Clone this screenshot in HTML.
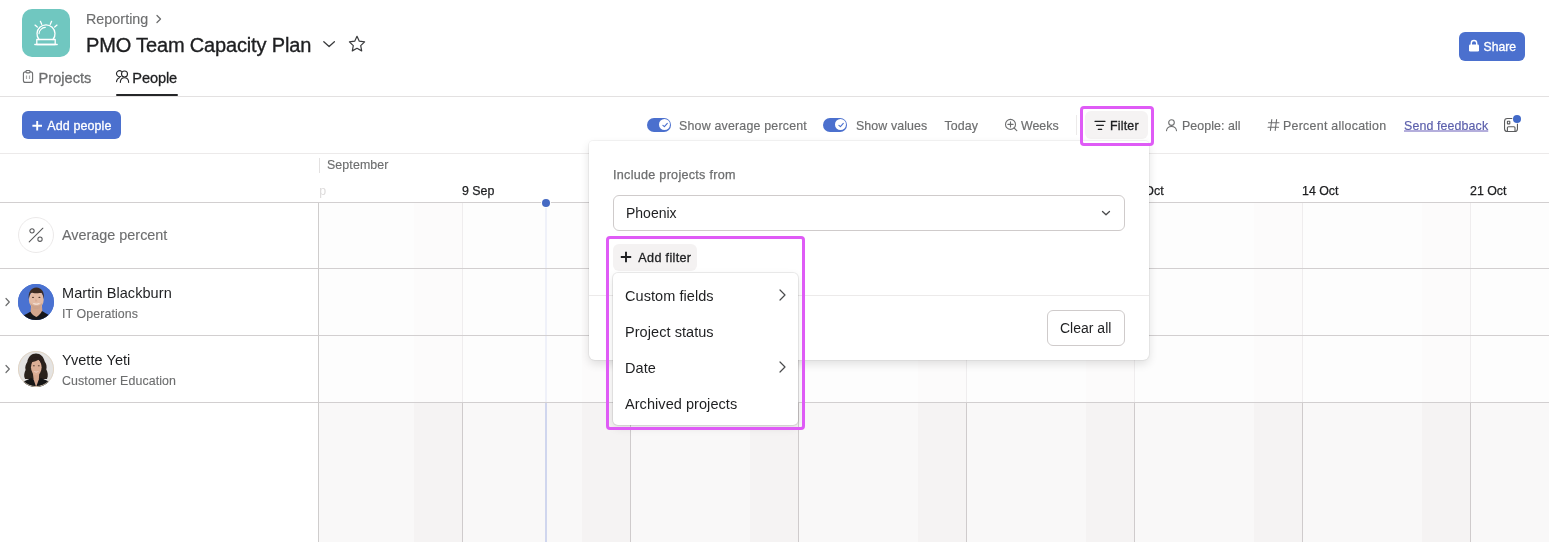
<!DOCTYPE html>
<html lang="en">
<head>
<meta charset="utf-8">
<title>PMO Team Capacity Plan</title>
<style>
*{box-sizing:border-box;margin:0;padding:0}
html,body{width:1549px;height:542px;overflow:hidden;background:#fff}
body{font-family:"Liberation Sans",Arial,sans-serif;color:#1e1f21;position:relative;-webkit-font-smoothing:antialiased}
.abs{position:absolute}
.t{position:absolute;white-space:nowrap;line-height:1}
/* header */
#icon{left:22px;top:9px;width:48px;height:48px;border-radius:10px;background:#70c7c0}
#crumb{left:86px;top:12px;font-size:14.3px;color:#6d6e6f;letter-spacing:0.04px;-webkit-text-stroke:0.15px}
#title{left:86px;top:34.600px;font-size:20px;color:#1e1f21;letter-spacing:-0.16px;-webkit-text-stroke:0.35px #1e1f21}
#share{left:1459px;top:32px;width:66px;height:28.5px;border-radius:6px;background:#4b70ce;color:#fff;font-size:12.2px;-webkit-text-stroke:0.3px #fff}
#hdrline{left:0;top:96px;width:1549px;height:1px;background:#e3e1e1}
.tab{font-size:14.6px;top:70.600px;-webkit-text-stroke:0.3px}
#tabul{left:116.400px;top:93.500px;width:61.200px;height:2.100px;background:#252628;border-radius:1px}
/* toolbar */
#addp{left:22px;top:111px;width:98.5px;height:28px;border-radius:6px;background:#4b70ce;color:#fff;font-size:12.5px;-webkit-text-stroke:0.3px #fff}
.tb{font-size:12.4px;color:#6d6e6f;top:119.500px;-webkit-text-stroke:0.18px}
.tog{position:absolute;top:117.500px;width:24px;height:14px;border-radius:7px;background:#4b70ce}
.tog i{position:absolute;right:1px;top:1.500px;width:11px;height:11px;border-radius:5.500px;background:#fff}
#tbline{left:0;top:153px;width:1549px;height:1px;background:#eceaea}
/* grid */
#grid{left:319px;top:203px;width:1230px;height:339px;overflow:hidden;background:#f9f8f8}
#gridlow{left:0;top:0;width:1230px;height:200px;background:rgba(255,255,255,0.66)}
.we{position:absolute;top:0;width:48px;height:339px;background:#f5f3f3}
.wl{position:absolute;top:0;width:1px;height:339px;background:#cfcbcc}
.hl{position:absolute;left:0;height:1px;background:#d2cfd0}
#leftline{left:318px;top:203px;width:1px;height:339px;background:#cfcdcd}
.date{font-size:12.4px;color:#1e1f21;top:184.600px;-webkit-text-stroke:0.25px}
.nm{font-size:14.5px;color:#1e1f21;left:62px;letter-spacing:0.06px}
.sub{font-size:12.4px;color:#6d6e6f;left:62px;letter-spacing:0.1px;margin-top:0.500px;-webkit-text-stroke:0.12px}
.chev{position:absolute;left:4px}
.av{position:absolute;left:18px;width:36px;height:36px;border-radius:18px;overflow:hidden}
/* panel */
#panel{left:589px;top:141px;width:560px;height:219px;background:#fff;border-radius:4px 4px 6px 6px;box-shadow:0 0 0 1px rgba(0,0,0,0.045),0 4px 10px rgba(0,0,0,0.12)}
#sel{left:613px;top:195px;width:512px;height:36px;border:1px solid #cfcbcb;border-radius:6px;background:#fff}
#addf{left:613px;top:243.500px;width:83.500px;height:27px;border-radius:6px;background:#f4f2f2}
#menu{left:613px;top:273px;width:185px;height:152px;border-radius:5px;background:#fff;box-shadow:0 0 0 1px rgba(0,0,0,0.07),0 3px 8px rgba(0,0,0,0.10)}
.mi{font-size:14.5px;color:#1e1f21;left:625px;letter-spacing:0.06px;margin-top:0.500px}
#pdiv{left:589px;top:295px;width:560px;height:1px;background:#eceaea}
#clr{left:1047px;top:310px;width:78px;height:36px;border:1px solid #cfcbcb;border-radius:6px;background:#fff}
.hi{position:absolute;border:3px solid #df5bf6;border-radius:4px}
</style>
</head>
<body>
<div id="root" style="position:absolute;left:0;top:0;width:1549px;height:542px;will-change:transform">
<!-- HEADER -->
<div id="icon" class="abs">
<svg width="48" height="48" viewBox="0 0 48 48" fill="none" stroke="#fff" stroke-width="1.300" stroke-linecap="round" stroke-linejoin="round">
<path d="M17 30.500a9 9 0 1 1 14 0"/>
<path d="M14.800 30.500h18.400v5h-18.400z"/>
<path d="M12.800 35.500h22.400"/>
<path d="M17 24.600a6.600 6.600 0 0 1 6.300-6.200" stroke-width="1.100"/>
<path d="M18.400 12.300l1.300 3M29.600 12.300l-1.300 3M13 16.100l2.300 2M35 16.100l-2.300 2"/>
</svg>
</div>
<div id="crumb" class="t">Reporting</div>
<svg class="abs" style="left:154px;top:13px" width="10" height="12" viewBox="0 0 10 12" fill="none" stroke="#6d6e6f" stroke-width="1.3" stroke-linecap="round" stroke-linejoin="round"><path d="M3 2.500l3.500 3.500-3.500 3.500"/></svg>
<div id="title" class="t">PMO Team Capacity Plan</div>
<svg class="abs" style="left:321px;top:38px" width="16" height="12" viewBox="0 0 16 12" fill="none" stroke="#3a3b3d" stroke-width="1.300" stroke-linecap="round" stroke-linejoin="round"><path d="M2.800 3.800l5.300 4.700 5.300-4.700"/></svg>
<svg class="abs" style="left:347px;top:34px" width="20" height="20" viewBox="0 0 20 20" fill="none" stroke="#3a3b3d" stroke-width="1.2" stroke-linejoin="round"><path d="M10 2.300l2.300 4.900 5.300.7-3.900 3.700 1 5.300-4.700-2.600-4.700 2.600 1-5.300-3.900-3.700 5.300-.7z"/></svg>
<div id="share" class="abs"><svg class="abs" style="left:9px;top:7px" width="12" height="13" viewBox="0 0 12 13"><rect x="1" y="5.500" width="10" height="7" rx="1.300" fill="#fff"/><path d="M3.300 6V4.200a2.700 2.700 0 0 1 5.400 0V6" fill="none" stroke="#fff" stroke-width="1.400"/></svg><span class="t" style="left:24.500px;top:8.800px">Share</span></div>
<!-- tabs -->
<svg class="abs" style="left:22px;top:69px" width="12" height="15" viewBox="0 0 12 15" fill="none" stroke="#6d6e6f" stroke-width="1.100"><rect x="1.400" y="2.900" width="9.200" height="10.500" rx="2"/><rect x="4" y="1.500" width="4" height="2.400" rx=".9" fill="#fff"/><path d="M4.500 6.600v3.400M7.500 6.600v3.400" stroke="#a9a9aa" stroke-width="1.200"/></svg>
<div class="t tab" style="left:38.600px;color:#6d6e6f">Projects</div>
<svg class="abs" style="left:115px;top:69px" width="16" height="15" viewBox="0 0 16 15" fill="none" stroke="#252628" stroke-width="1.100" stroke-linecap="round"><circle cx="9.500" cy="5" r="3"/><path d="M5.300 13.400c.2-2.900 1.800-4.600 4.200-4.600s4 1.700 4.200 4.600"/><path d="M5.700 7.500a3 3 0 1 1 .8-5.100M1.500 12.800c.2-2 1.200-3.500 2.900-4.100"/></svg>
<div class="t tab" style="left:132.300px;color:#1e1f21;letter-spacing:-0.1px">People</div>
<div id="tabul" class="abs"></div>
<div id="hdrline" class="abs"></div>
<!-- TOOLBAR -->
<div id="addp" class="abs"><svg class="abs" style="left:9px;top:8.500px" width="13" height="13" viewBox="0 0 13 13" stroke="#fff" stroke-width="1.900"><path d="M6.200 1v9.600M1.400 5.800h9.600"/></svg><span class="t" style="left:25.300px;top:8.600px;letter-spacing:0.1px">Add people</span></div>
<div class="tog" style="left:647px"><i></i><svg class="abs" style="right:0.500px;top:1px" width="12" height="12" viewBox="0 0 12 12" fill="none" stroke="#4b70ce" stroke-width="1.100" stroke-linecap="round" stroke-linejoin="round"><path d="M3.900 6.300l1.500 1.400 2.900-3.300"/></svg></div>
<div class="t tb" style="left:679px;letter-spacing:0.2px">Show average percent</div>
<div class="tog" style="left:823px"><i></i><svg class="abs" style="right:0.500px;top:1px" width="12" height="12" viewBox="0 0 12 12" fill="none" stroke="#4b70ce" stroke-width="1.100" stroke-linecap="round" stroke-linejoin="round"><path d="M3.900 6.300l1.500 1.400 2.900-3.300"/></svg></div>
<div class="t tb" style="left:856px;letter-spacing:0.09px">Show values</div>
<div class="t tb" style="left:944.5px;letter-spacing:0.12px">Today</div>
<svg class="abs" style="left:1004px;top:118px" width="14" height="14" viewBox="0 0 14 14" fill="none" stroke="#6d6e6f" stroke-width="1.100" stroke-linecap="round"><circle cx="6.500" cy="6.400" r="5"/><path d="M10.100 10l2.700 2.700M3.900 6.400h5.200M6.500 3.800v5.200"/></svg>
<div class="t tb" style="left:1021px">Weeks</div>
<div class="abs" style="left:1076px;top:115px;width:1px;height:20px;background:#eceaea"></div>
<div class="abs" style="left:1085px;top:111px;width:63px;height:28px;border-radius:6px;background:#f5f3f3"></div>
<svg class="abs" style="left:1093px;top:119px" width="14" height="12" viewBox="0 0 14 12" fill="none" stroke="#1e1f21" stroke-width="1.300" stroke-linecap="round"><path d="M2 2.300h10M3.600 6.300h6.800M5.300 10.300h3.400"/></svg>
<div class="t tb" style="left:1110px;color:#1e1f21;letter-spacing:0.2px;-webkit-text-stroke:0.3px">Filter</div>
<svg class="abs" style="left:1165px;top:118px" width="13" height="14" viewBox="0 0 13 14" fill="none" stroke="#6d6e6f" stroke-width="1.100" stroke-linecap="round"><circle cx="6.500" cy="4.600" r="2.800"/><path d="M1.500 12.700c.3-2.700 2.100-4.200 5-4.200s4.700 1.500 5 4.200"/></svg>
<div class="t tb" style="left:1182px;letter-spacing:0.06px">People: all</div>
<svg class="abs" style="left:1267px;top:118px" width="13" height="14" viewBox="0 0 13 14" fill="none" stroke="#6d6e6f" stroke-width="1.100" stroke-linecap="round"><path d="M4.800 1.500l-1.400 11M9.600 1.500l-1.400 11M1.500 4.800h10.500M1 9.200h10.500"/></svg>
<div class="t tb" style="left:1283px;letter-spacing:0.27px">Percent allocation</div>
<div class="t tb" style="left:1404px;color:#5b5fab;text-decoration:underline;text-decoration-color:#b4aedc;text-decoration-thickness:2px;text-underline-offset:0px;text-decoration-skip-ink:none;letter-spacing:0.12px">Send feedback</div>
<svg class="abs" style="left:1502px;top:113px" width="22" height="22" viewBox="0 0 22 22" fill="none" stroke="#5a5b5d" stroke-width="1.100"><rect x="2.550" y="5.550" width="12.900" height="12.900" rx="2.800"/><rect x="5.400" y="8.300" width="2.400" height="2.600" rx=".3"/><path d="M5.400 18.400v-3.700a1 1 0 0 1 1-1h5.600a1 1 0 0 1 1 1v3.700"/><circle cx="15" cy="6" r="4.800" fill="#fff" stroke="none"/><circle cx="15" cy="6" r="4" fill="#4169c8" stroke="none"/></svg>
<div id="tbline" class="abs"></div>
<!-- TIMELINE HEADER -->
<div class="abs" style="left:319px;top:157.500px;width:1px;height:15.500px;background:#e3e1e1"></div>
<div class="t" style="left:327px;top:159.400px;font-size:12.400px;color:#6d6e6f;letter-spacing:0.1px;-webkit-text-stroke:0.15px">September</div>
<div class="abs" style="left:320px;top:180px;width:8px;height:20px;overflow:hidden"><div class="t date" style="left:-0.800px;top:4.600px;color:#dddbdb;-webkit-text-stroke:0">p</div></div>
<div class="t date" style="left:462px">9 Sep</div>
<div class="t date" style="left:1134px">7 Oct</div>
<div class="t date" style="left:1302px">14 Oct</div>
<div class="t date" style="left:1470px">21 Oct</div>
<!-- GRID -->
<div id="grid" class="abs">
<div class="we" style="left:95px"></div><div class="we" style="left:263px"></div><div class="we" style="left:431px"></div><div class="we" style="left:599px"></div><div class="we" style="left:767px"></div><div class="we" style="left:935px"></div><div class="we" style="left:1103px"></div>
<div class="wl" style="left:143px"></div><div class="wl" style="left:311px"></div><div class="wl" style="left:479px"></div><div class="wl" style="left:647px"></div><div class="wl" style="left:815px"></div><div class="wl" style="left:983px"></div><div class="wl" style="left:1151px"></div>
<div class="wl" style="left:226px;width:2px;background:#d0d6ee"></div>
<div id="gridlow" class="abs"></div>
</div>
<div class="hl" style="top:202px;width:1549px"></div>
<div class="hl" style="top:268px;width:1549px"></div>
<div class="hl" style="top:335px;width:1549px"></div>
<div class="hl" style="top:402px;width:1549px"></div>
<div id="leftline" class="abs"></div>
<div class="abs" style="left:542px;top:199px;width:8px;height:8px;border-radius:4px;background:#4469c3;box-shadow:0 0 0 1px #fdfdfd"></div>
<!-- LEFT ROWS -->
<div class="abs" style="left:18px;top:217px;width:36px;height:36px;border-radius:18px;border:1px solid #ebe9e9;background:#fff"></div>
<svg class="abs" style="left:27px;top:226px" width="18" height="18" viewBox="0 0 18 18" fill="none" stroke="#58595b" stroke-width="1.050" stroke-linecap="round"><circle cx="5" cy="4.800" r="2.150"/><circle cx="13" cy="13.200" r="2.150"/><path d="M15.900 2.200l-13.700 13.700"/></svg>
<div class="t" style="left:62px;top:228px;font-size:14.400px;color:#6d6e6f;-webkit-text-stroke:0.12px">Average percent</div>

<svg class="chev" style="top:296px" width="8" height="12" viewBox="0 0 8 12" fill="none" stroke="#6d6e6f" stroke-width="1.200" stroke-linecap="round" stroke-linejoin="round"><path d="M2 2.500l3.300 3.500-3.300 3.500"/></svg>
<div class="av" style="top:284px;background:#4a72d1">
<svg width="36" height="36" viewBox="0 0 36 36"><defs><filter id="bl" x="-10%" y="-10%" width="120%" height="120%"><feGaussianBlur stdDeviation="0.450"/></filter></defs><rect width="36" height="36" fill="#4a72d1"/><g filter="url(#bl)">
<path d="M13.200 20h10.600l.6 8-3 9h-6l-2.800-9z" fill="#d3a58d"/>
<path d="M2 38c.5-4.500 2.500-6.500 6-7.800l4.400-2.400c1.500 2.600 3.500 4.200 5.900 5.200 2.400-1.200 4.300-3 5.700-5.900l4.500 2.600c3 1.200 5 3.500 5.500 8.300z" fill="#15161a"/>
<ellipse cx="18.300" cy="15.700" rx="7.400" ry="9.300" fill="#e3bba5"/>
<path d="M10.800 15c-.8-6.500 2.200-11.600 7.600-11.600s8.300 5 7.400 11.600c-.5-3-1.200-5.200-2.300-6.300-1.600.6-8.700.6-10.400 0-1.100 1.100-1.800 3.300-2.300 6.300z" fill="#3b2a22"/>
<path d="M12.300 18.500c.5 4.500 2.800 6.600 6 6.600s5.500-2.100 6-6.600c-1.400 2.300-3.300 3.100-6 3.100s-4.600-.8-6-3.100z" fill="#c59c85" opacity=".8"/>
<path d="M15 19c2 1 4.800 1 6.800 0-.8 2.100-6 2.100-6.800 0z" fill="#fbf3ee"/>
<ellipse cx="15" cy="13.300" rx="1.100" ry=".6" fill="#4a342b"/><ellipse cx="21.400" cy="13.300" rx="1.100" ry=".6" fill="#4a342b"/>
<path d="M17.600 14.500l-.6 3h2.600z" fill="#d2a48c" opacity=".7"/>
</g></svg></div>
<div class="t nm" style="top:286px">Martin Blackburn</div>
<div class="t sub" style="top:307px">IT Operations</div>

<svg class="chev" style="top:363px" width="8" height="12" viewBox="0 0 8 12" fill="none" stroke="#6d6e6f" stroke-width="1.200" stroke-linecap="round" stroke-linejoin="round"><path d="M2 2.500l3.300 3.500-3.300 3.500"/></svg>
<div class="av" style="top:351px;background:#e4e3e2">
<svg width="36" height="36" viewBox="0 0 36 36"><rect width="36" height="36" fill="#e4e3e2"/><g filter="url(#bl)">
<path d="M7.200 28c-1.800-3-.8-6.500.4-9-.9-3 .2-6 1.700-8 .9-5 4.200-8.400 8.700-8.400s7.600 3.200 8.700 7.900c1.600 2.100 2.400 4.800 1.600 7.900 1.400 2.600 2.200 6 .7 9.600z" fill="#2a201d"/>
<path d="M2.500 38c.5-5 2.500-7.500 6-8.700l4.500-2 5 1.700 5.500-1.700 4.500 2c3.500 1.200 5.500 3.700 6 8.700z" fill="#121216"/>
<path d="M14.800 22h6.500l-.5 6.500-2.700 7.500-2.500-7.500z" fill="#d6a78e"/>
<ellipse cx="18.300" cy="16.300" rx="5.300" ry="8.200" fill="#dcae95"/>
<path d="M12.600 14c-.3-4.800 2-8 5.700-8s5.800 3.200 5.500 8c-.8-2.600-1.900-4.300-3.300-5.200-1.600 1.300-5 2.300-6.500 2.200-.7.800-1.100 1.800-1.400 3z" fill="#2a201d"/>
<path d="M15.600 20.100c1.600.8 3.800.8 5.300 0-.6 1.700-4.700 1.700-5.300 0z" fill="#f3dcd8"/>
<ellipse cx="15.900" cy="14.800" rx="1" ry=".5" fill="#4a342b"/><ellipse cx="20.800" cy="14.800" rx="1" ry=".5" fill="#4a342b"/>
</g><circle cx="18" cy="18" r="17.600" fill="none" stroke="#e2d3be" stroke-width=".9"/></svg></div>
<div class="t nm" style="top:353px">Yvette Yeti</div>
<div class="t sub" style="top:374px">Customer Education</div>

<!-- FILTER PANEL -->
<div id="panel" class="abs"></div>
<div class="t" style="left:613px;top:168.600px;font-size:12.600px;color:#6d6e6f;letter-spacing:0.28px;-webkit-text-stroke:0.25px">Include projects from</div>
<div id="sel" class="abs"><span class="t" style="left:12px;top:10px;font-size:14px">Phoenix</span>
<svg class="abs" style="left:486px;top:11.400px" width="12" height="12" viewBox="0 0 12 12" fill="none" stroke="#4a4b4d" stroke-width="1.300" stroke-linecap="round" stroke-linejoin="round"><path d="M2.500 4.500l3.500 3.300 3.500-3.300"/></svg></div>
<div id="pdiv" class="abs"></div>
<div id="clr" class="abs"><span class="t" style="left:12px;top:10px;font-size:14px">Clear all</span></div>
<div id="addf" class="abs"><svg class="abs" style="left:7px;top:7.500px" width="12" height="12" viewBox="0 0 12 12" stroke="#1e1f21" stroke-width="1.900"><path d="M6 .8v10.400M.8 6h10.400"/></svg><span class="t" style="left:25.300px;top:8.300px;font-size:12.600px;letter-spacing:0.34px;-webkit-text-stroke:0.3px">Add filter</span></div>
<div id="menu" class="abs"></div>
<div class="t mi" style="top:288px">Custom fields</div>
<div class="t mi" style="top:324px">Project status</div>
<div class="t mi" style="top:360px">Date</div>
<div class="t mi" style="top:396px">Archived projects</div>
<svg class="abs" style="left:776px;top:288px" width="12" height="14" viewBox="0 0 12 14" fill="none" stroke="#4a4b4d" stroke-width="1.200" stroke-linecap="round" stroke-linejoin="round"><path d="M4 2l5 5-5 5"/></svg>
<svg class="abs" style="left:776px;top:360px" width="12" height="14" viewBox="0 0 12 14" fill="none" stroke="#4a4b4d" stroke-width="1.200" stroke-linecap="round" stroke-linejoin="round"><path d="M4 2l5 5-5 5"/></svg>
<!-- highlights -->
<div class="hi" style="left:1080px;top:106px;width:74px;height:40px"></div>
<div class="hi" style="left:606px;top:236px;width:199px;height:194px"></div>
</div>
</body>
</html>
